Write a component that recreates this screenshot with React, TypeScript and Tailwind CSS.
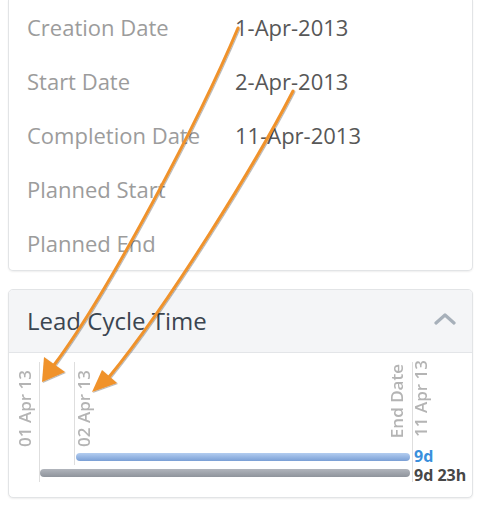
import React from "react";

const rows: [string, string][] = [
  ["Creation Date", "1-Apr-2013"],
  ["Start Date", "2-Apr-2013"],
  ["Completion Date", "11-Apr-2013"],
  ["Planned Start", ""],
  ["Planned End", ""],
];

const font = { fontFamily: "'Open Sans', 'Noto Sans', sans-serif" };

export default function App() {
  return (
    <div className="relative w-[480px] h-[507px] bg-white overflow-hidden" style={font}>
      {/* Details card */}
      <div className="ml-2 mr-[7px] border-x border-b border-[#e2e4e6] rounded-b-[5px] bg-white shadow-[0_1px_2px_rgba(0,0,0,0.07)]">
        {rows.map(([label, value]) => (
          <div key={label} className="grid grid-cols-[208px_1fr] items-center h-[54px] pl-[18px] text-[22px] leading-none">
            <span className="text-[#9c9c9c]">{label}</span>
            <span className="text-[#575757]">{value}</span>
          </div>
        ))}
      </div>

      {/* Lead Cycle Time card */}
      <div className="mt-[18px] ml-2 mr-[7px] border border-[#e2e4e6] rounded-[5px] bg-white shadow-[0_1px_2px_rgba(0,0,0,0.07)] overflow-hidden">
        <div className="h-[63px] flex items-center justify-between pl-[18px] pr-[16px] bg-[#f4f5f7] border-b border-[#e3e5e8]">
          <span className="text-[24px] font-medium text-[#3b4550] leading-none">Lead Cycle Time</span>
          <svg width="22" height="12" viewBox="0 0 22 12" className="mt-[-4px]">
            <path d="M2 10 L11 2 L20 10" fill="none" stroke="#a7b0ba" strokeWidth="3.2" strokeLinecap="round" strokeLinejoin="round" />
          </svg>
        </div>
        <div className="relative h-[144px] flex flex-col justify-end pb-[16px]">
          {/* timeline markers */}
          <div className="absolute left-[30px] top-[9px] w-px h-[120px] bg-[#dedede]" />
          <div className="absolute left-[65px] top-[9px] w-px h-[103px] bg-[#dedede]" />
          <div className="absolute left-[403px] top-[9px] w-px h-[120px] bg-[#dedede]" />

          <span className="absolute left-[7px] bottom-[50px] [writing-mode:vertical-rl] rotate-180 text-[17px] leading-[17px] font-semibold text-[#b4b4b4] whitespace-nowrap">01 Apr 13</span>
          <span className="absolute left-[66px] bottom-[50px] [writing-mode:vertical-rl] rotate-180 text-[17px] leading-[17px] font-semibold text-[#b4b4b4] whitespace-nowrap">02 Apr 13</span>
          <span className="absolute left-[379px] bottom-[59px] [writing-mode:vertical-rl] rotate-180 text-[17px] leading-[17px] font-semibold text-[#b4b4b4] whitespace-nowrap">End Date</span>
          <span className="absolute left-[403px] bottom-[60px] [writing-mode:vertical-rl] rotate-180 text-[17px] leading-[17px] font-semibold text-[#b4b4b4] whitespace-nowrap">11 Apr 13</span>

          {/* bars */}
          <div className="flex items-center h-[16px] pl-[67px] gap-1">
            <div className="flex-1 h-[8px] rounded-full bg-gradient-to-b from-[#b3cdf0] to-[#7a9fd5]" />
            <span className="w-[58px] -mt-[3px] text-[16px] leading-[16px] font-bold text-[#3a8fdc]">9d</span>
          </div>
          <div className="flex items-center h-[16px] pl-[31px] gap-1">
            <div className="flex-1 h-[8px] rounded-full bg-gradient-to-b from-[#b1b5bc] to-[#8f949c]" />
            <span className="w-[58px] mt-[3px] text-[16px] leading-[16px] font-bold text-[#474747] whitespace-nowrap">9d 23h</span>
          </div>
        </div>
      </div>

      {/* Annotation arrows */}
      <svg className="absolute inset-0 pointer-events-none" width="480" height="507" viewBox="0 0 480 507">
        <defs>
          <filter id="sh" x="-20%" y="-20%" width="140%" height="140%">
            <feDropShadow dx="0.8" dy="0.8" stdDeviation="0.6" floodColor="#000" floodOpacity="0.35" />
          </filter>
        </defs>
        <g filter="url(#sh)">
          <path d="M238 28 C200 118 110 290 54 365" fill="none" stroke="#f0922b" strokeWidth="3" strokeLinecap="round" />
          <polygon points="42,382 44,357 65,372" fill="#f0922b" />
          <path d="M293 91 C255 165 168 305 109 377" fill="none" stroke="#f0922b" strokeWidth="3" strokeLinecap="round" />
          <polygon points="92,392 102,370 117,383" fill="#f0922b" />
        </g>
      </svg>
    </div>
  );
}
